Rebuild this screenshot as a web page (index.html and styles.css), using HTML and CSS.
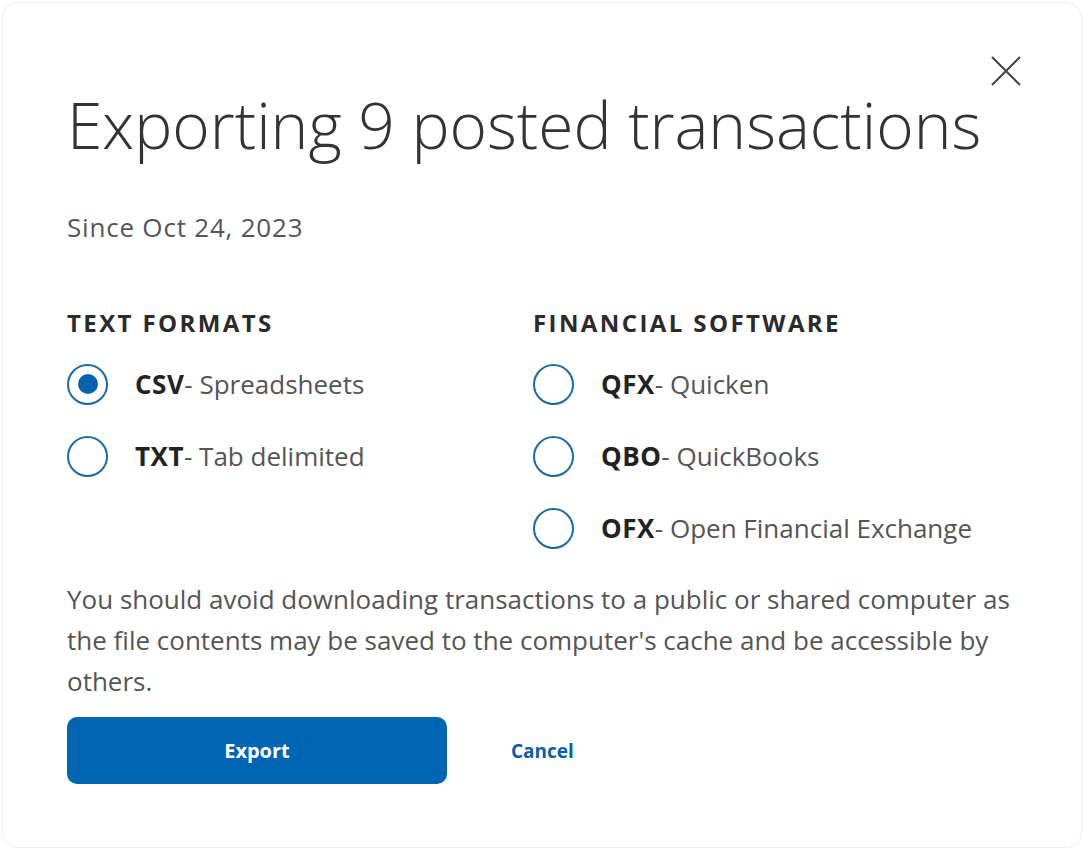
FILE: index.html
```html
<!DOCTYPE html>
<html lang="en">
<head>
    <meta charset="UTF-8">
    <meta name="viewport" content="width=device-width, initial-scale=1.0">
    <title>Export transactions</title>
    <link rel="stylesheet" href="styles.css">
</head>
<body>
    <form class="modal">
        <button type="button" class="close" aria-label="Close">
            <svg width="30" height="30" viewBox="0 0 30 30">
                <path d="M1 1 L29 29 M29 1 L1 29" stroke="#444" stroke-width="2" fill="none"/>
            </svg>
        </button>
        <h1 class="title">Exporting 9 posted transactions</h1>
        <p class="since">Since Oct 24, 2023</p>
        <div class="formats">
            <div class="group">
                <h2>TEXT FORMATS</h2>
                <label class="option">
                    <input type="radio" name="format" value="csv" checked>
                    <span class="radio"></span>
                    <span><b>CSV</b>- Spreadsheets</span>
                </label>
                <label class="option">
                    <input type="radio" name="format" value="txt">
                    <span class="radio"></span>
                    <span><b>TXT</b>- Tab delimited</span>
                </label>
            </div>
            <div class="group">
                <h2>FINANCIAL SOFTWARE</h2>
                <label class="option">
                    <input type="radio" name="format" value="qfx">
                    <span class="radio"></span>
                    <span><b>QFX</b>- Quicken</span>
                </label>
                <label class="option">
                    <input type="radio" name="format" value="qbo">
                    <span class="radio"></span>
                    <span><b>QBO</b>- QuickBooks</span>
                </label>
                <label class="option">
                    <input type="radio" name="format" value="ofx">
                    <span class="radio"></span>
                    <span><b>OFX</b>- Open Financial Exchange</span>
                </label>
            </div>
        </div>
        <p class="notice">You should avoid downloading transactions to a public or shared computer as the file contents may be saved to the computer's cache and be accessible by others.</p>
        <div class="actions">
            <button type="submit" class="export">Export</button>
            <button type="button" class="cancel">Cancel</button>
        </div>
    </form>
</body>
</html>
```

FILE: styles.css
```css
body {
    margin: 0;
    background: #fff;
    font-family: "Open Sans", "Liberation Sans", sans-serif;
    color: #555;
}

.modal {
    position: relative;
    box-sizing: border-box;
    width: 1080px;
    min-height: 846px;
    margin: 2px;
    padding: 82px 60px 0 64px;
    border: 1px solid #f1f1f1;
    border-radius: 16px;
    background: #fff;
}

.close {
    position: absolute;
    top: 53px;
    right: 60px;
    padding: 0;
    border: none;
    background: none;
    cursor: pointer;
}

.close svg {
    display: block;
}

.title {
    margin: 0;
    font-size: 64px;
    font-weight: 300;
    line-height: 80px;
    color: #333;
}

.since {
    margin: 47px 0 0;
    font-size: 26px;
    letter-spacing: 0.8px;
    line-height: 30px;
}

.formats {
    display: grid;
    grid-template-columns: 466px 1fr;
    margin-top: 67px;
}

.group h2 {
    margin: 0 0 11px;
    font-size: 24px;
    font-weight: 700;
    letter-spacing: 2.4px;
    line-height: 28px;
    color: #2b2b2b;
}

.option {
    display: flex;
    align-items: center;
    gap: 27px;
    height: 72px;
    font-size: 26px;
    cursor: pointer;
}

.option b {
    color: #222;
    font-weight: 700;
    letter-spacing: 0.5px;
}

.option input {
    display: none;
}

.radio {
    box-sizing: border-box;
    width: 41px;
    height: 41px;
    border: 2.5px solid #1b6aa8;
    border-radius: 50%;
    display: flex;
    align-items: center;
    justify-content: center;
    flex-shrink: 0;
}

.option input:checked + .radio::after {
    content: "";
    width: 20px;
    height: 20px;
    border-radius: 50%;
    background: #0b63b0;
}

.notice {
    margin: 15px 0 0;
    font-size: 26px;
    line-height: 41px;
}

.actions {
    display: flex;
    align-items: center;
    gap: 64px;
    margin-top: 15px;
}

.export {
    width: 380px;
    height: 67px;
    border: none;
    border-radius: 10px;
    background: #0066b3;
    color: #fff;
    font-family: inherit;
    font-size: 20px;
    font-weight: 700;
    cursor: pointer;
}

.cancel {
    padding: 0;
    border: none;
    background: none;
    color: #0b5ea8;
    font-family: inherit;
    font-size: 19px;
    font-weight: 700;
    cursor: pointer;
}
```
